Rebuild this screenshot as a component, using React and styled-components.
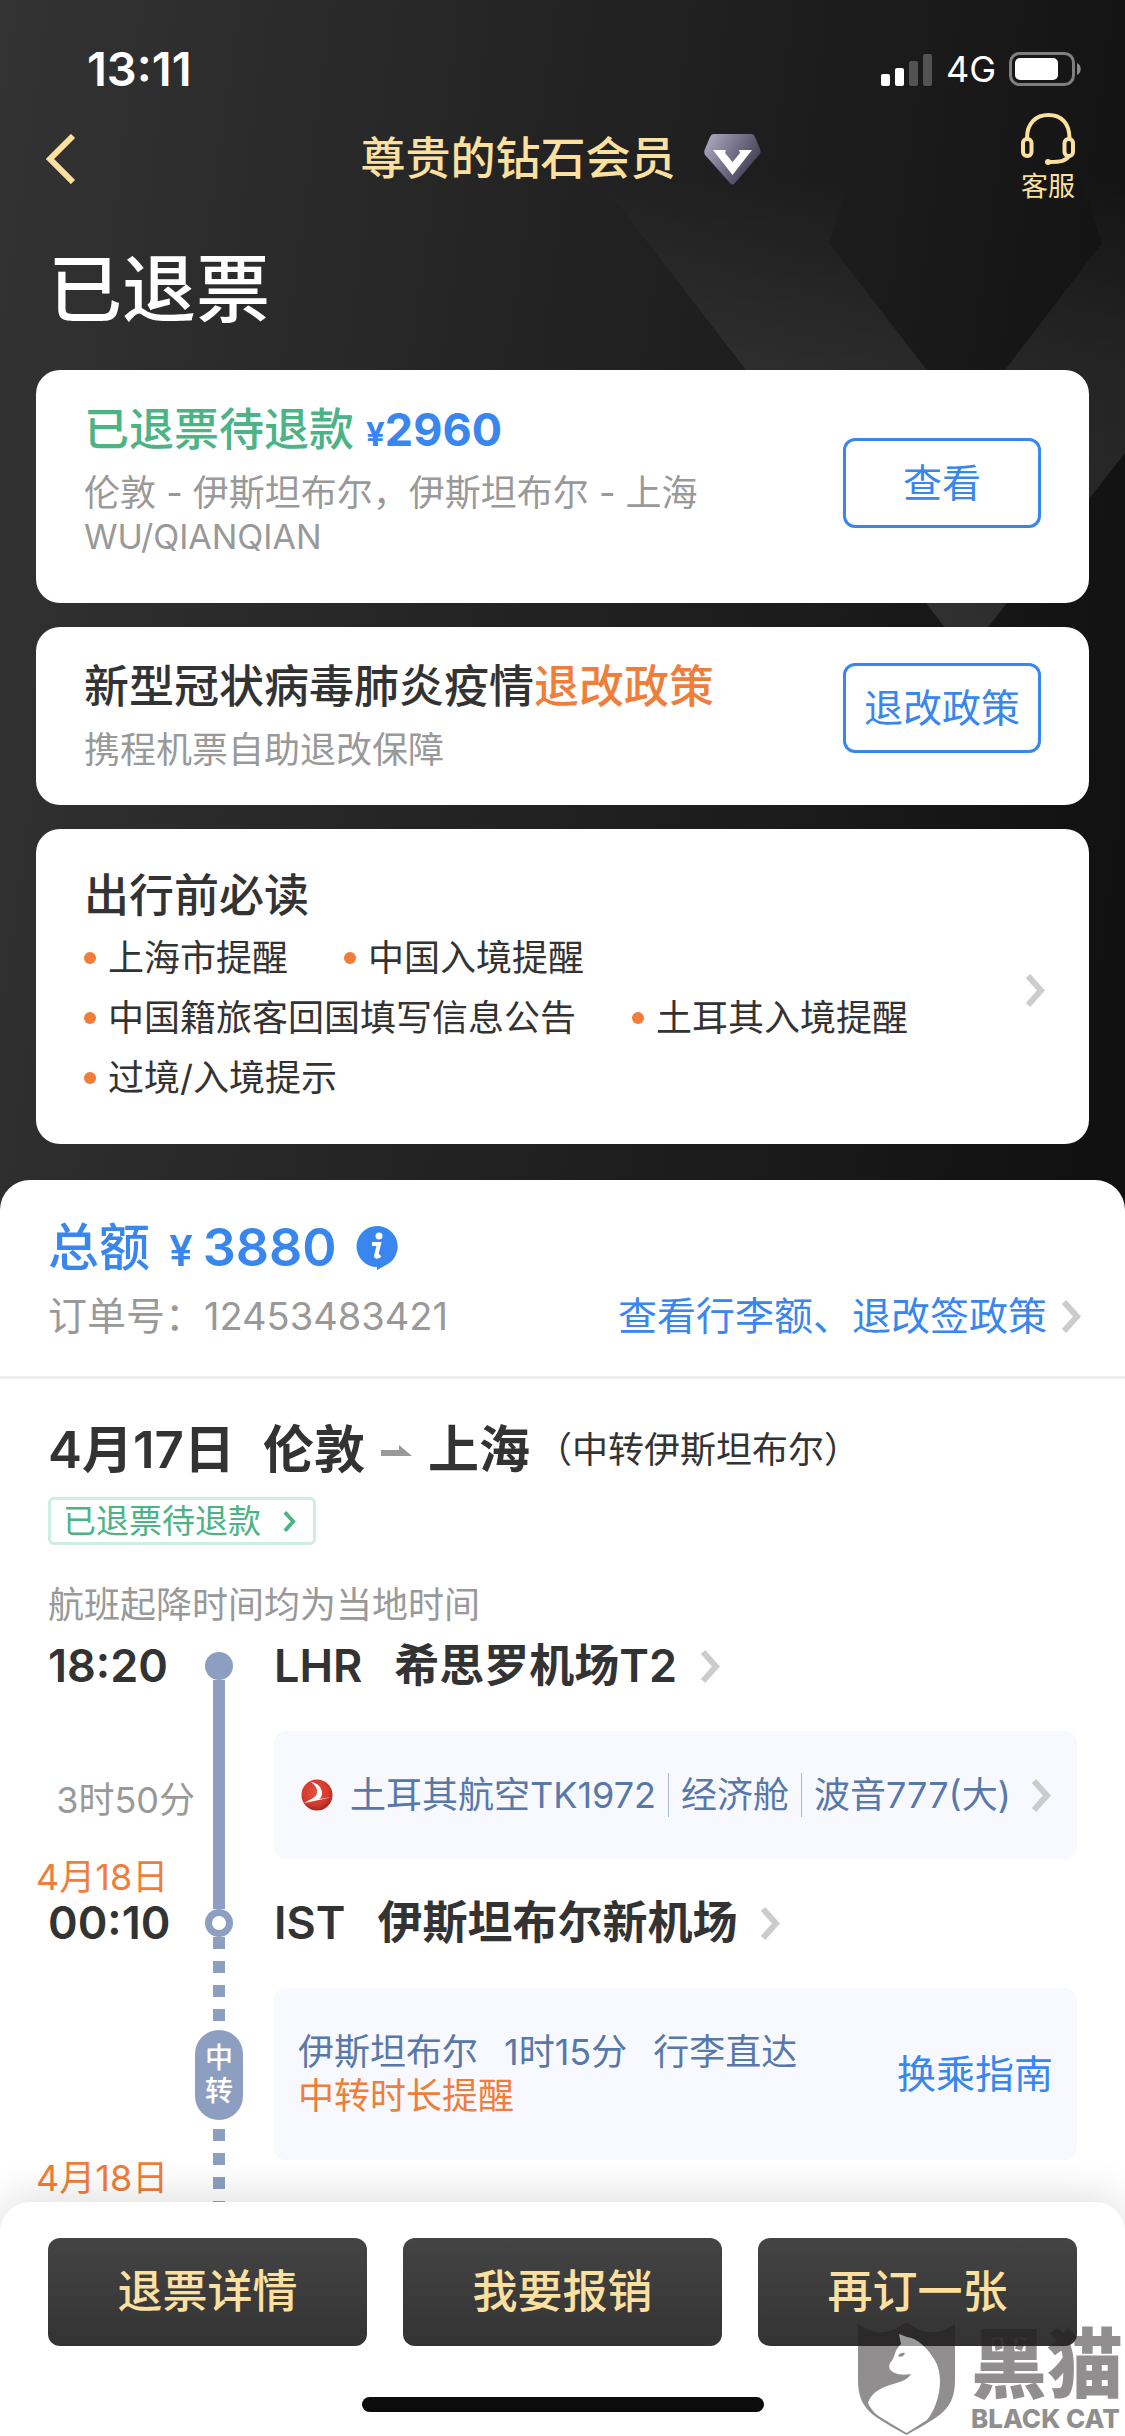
import React from "react";
import styled, { createGlobalStyle } from "styled-components";

const GlobalStyle = createGlobalStyle`
  * {
    box-sizing: border-box;
  }

  body {
    margin: 0;
    background: #fff;
    color: #333;
    font-family: Inter, "Noto Sans CJK SC", sans-serif;
    font-size: 36px;
    line-height: 44px;
  }

  h1, h2, p, ul, ol {
    margin: 0;
    padding: 0;
    font-size: inherit;
    font-weight: inherit;
  }

  ul, ol {
    list-style: none;
  }

  a {
    color: inherit;
    text-decoration: none;
  }

  button {
    border: 0;
    padding: 0;
    background: none;
    color: inherit;
    font: inherit;
    cursor: pointer;
  }

  svg {
    display: block;
    flex: none;
  }
`;

const Chevron = ({ size = 33, color = "#ccc", stroke = 6 }) => (
  <svg width={(size * 2) / 3} height={size} viewBox="0 0 22 33" fill="none">
    <path d="M3 2l13 14.5L3 31" stroke={color} strokeWidth={stroke} />
  </svg>
);

const BackIcon = () => (
  <svg width="30" height="50" viewBox="0 0 30 50" fill="none">
    <path d="M27 2L4 25l23 23" stroke="#fce0a0" strokeWidth="6" />
  </svg>
);

const SignalIcon = () => (
  <svg width="52" height="33" viewBox="0 0 52 33" fill="#fff">
    <rect y="21" width="9" height="12" rx="2" />
    <rect x="14" y="15" width="9" height="18" rx="2" />
    <rect x="28" y="8" width="9" height="25" rx="2" opacity="0.25" />
    <rect x="42" y="1" width="9" height="32" rx="2" opacity="0.25" />
  </svg>
);

const BatteryIcon = () => (
  <svg width="74" height="34" viewBox="0 0 74 34">
    <rect x="1.5" y="1.5" width="63" height="31" rx="9" fill="none" stroke="#fff" strokeOpacity="0.45" strokeWidth="3" />
    <rect x="6" y="6" width="43" height="22" rx="5" fill="#fff" />
    <path d="M68 11c5 2 5 10 0 12z" fill="#fff" opacity="0.5" />
  </svg>
);

const DiamondIcon = () => (
  <svg width="57" height="51" viewBox="0 0 57 51">
    <defs>
      <linearGradient id="diamond" x1="0" y1="0.1" x2="0.9" y2="0.6">
        <stop offset="0" stopColor="#aeaac2" />
        <stop offset="1" stopColor="#474258" />
      </linearGradient>
    </defs>
    <path
      d="M10 0h37c2 0 3 1 4 3l5 12c1 2 1 4-1 6L31 49c-2 2-3 2-5 0L1 21c-1-2-1-4 0-6L6 3c1-2 2-3 4-3z"
      fill="url(#diamond)"
    />
    <path d="M9 16h13l-1 3 7.5 9 7.5-9-1-3h13L28.5 41z" fill="#fff" />
  </svg>
);

const HeadsetIcon = () => (
  <svg width="54" height="53" viewBox="0 0 54 53" fill="none" stroke="#fce0a0" strokeWidth="4">
    <path d="M6 25C6 10 15 2 27.5 2S48.5 10 48.5 25" />
    <rect x="2" y="26" width="8.5" height="17" rx="4" />
    <rect x="43.5" y="26" width="8.5" height="17" rx="4" />
    <path d="M48 43c-3 5-8 6-20 6" />
    <circle cx="27" cy="49" r="3" fill="#fce0a0" stroke="none" />
  </svg>
);

const InfoIcon = () => (
  <svg width="42" height="44" viewBox="0 0 42 44">
    <path d="M21 0a20.5 20.5 0 0 1 9 39l-9 5v-3A20.5 20.5 0 0 1 21 0z" fill="#3886ee" />
    <circle cx="23" cy="10" r="3.5" fill="#fff" />
    <path d="M16 18h7l-3 12c0 1 2 1 4-1" fill="none" stroke="#fff" strokeWidth="4" />
  </svg>
);

const RouteArrow = () => (
  <svg width="31" height="11" viewBox="0 0 31 11">
    <path d="M0 5h18V0l13 11H0z" fill="#999" />
  </svg>
);

const AirlineLogo = () => (
  <svg width="32" height="32" viewBox="0 0 32 32">
    <defs>
      <radialGradient id="airline" cx="0.45" cy="0.4" r="0.6">
        <stop offset="0" stopColor="#e5503f" />
        <stop offset="0.7" stopColor="#d6392c" />
        <stop offset="1" stopColor="#a52820" />
      </radialGradient>
    </defs>
    <circle cx="16" cy="16" r="15.5" fill="url(#airline)" />
    <path d="M10 3c7 1 11 6 11 11 0 3-1 5-3 6l13-2c-9 2-17 4-28 6 6-4 12-5 13-10 1-4-2-8-6-11z" fill="#fff" />
  </svg>
);

const BackdropV = styled.svg`
  position: absolute;
  top: 0;
  right: 0;
`;

const Page = styled.div`
  display: flex;
  flex-direction: column;
  height: 100vh;
  overflow: hidden;
  background: #fff;
`;

const Scroller = styled.main`
  flex: 1;
  min-height: 0;
  overflow-y: auto;
  scrollbar-width: none;
`;

const Hero = styled.header`
  position: relative;
  padding: 45px 36px 72px;
  background: linear-gradient(98deg, #333 0%, #242424 42%, #1a1a1a 72%, #111 96%);
`;

const HeroContent = styled.div`
  position: relative;
`;

const StatusBar = styled.div`
  display: flex;
  align-items: center;
  justify-content: space-between;
  height: 48px;
  padding: 0 6px 0 51px;
  color: #fff;
`;

const Clock = styled.span`
  font-size: 47px;
  font-weight: 600;
`;

const StatusIcons = styled.div`
  display: flex;
  align-items: center;
  gap: 13px;
`;

const NavBar = styled.nav`
  display: grid;
  grid-template-columns: 1fr auto 1fr;
  align-items: center;
  height: 100px;
  margin: 16px 14px 30px 10px;
  color: #fce0a0;
`;

const MemberTitle = styled.div`
  display: flex;
  align-items: center;
  gap: 28px;
  font-size: 45px;
  font-weight: 500;
`;

const Support = styled.button`
  justify-self: end;
  display: flex;
  flex-direction: column;
  align-items: center;
  gap: 3px;
  font-size: 27px;
  line-height: 36px;
`;

const Back = styled.button`
  justify-self: start;
`;

const PageTitle = styled.h1`
  margin: 0 0 31px 12px;
  color: #fff;
  font-size: 74px;
  font-weight: 500;
  line-height: 100px;
`;

const Cards = styled.div`
  display: flex;
  flex-direction: column;
  gap: 24px;
`;

const Card = styled.section`
  display: flex;
  align-items: ${(p) => p.$align || "center"};
  justify-content: space-between;
  padding: ${(p) => p.$padding};
  border-radius: 24px;
  background: #fff;
`;

const CardTitle = styled.h2`
  color: ${(p) => p.$color || "#333"};
  font-size: 45px;
  font-weight: 500;
  line-height: 48px;
`;

const Amount = styled.span`
  margin-left: 12px;
  color: #3886ee;
  font-weight: 700;

  small {
    font-size: 33px;
    line-height: 1;
  }
`;

const Accent = styled.span`
  color: #f07d3a;
`;

const CardNote = styled.div`
  margin-top: 17px;
  color: #999;
`;

const Passenger = styled.p`
  font-size: 34px;
`;

const OutlineButton = styled.button`
  flex: none;
  width: 198px;
  height: 90px;
  border: 3px solid #3886ee;
  border-radius: 12px;
  color: #3886ee;
  font-size: 39px;
`;

const Notices = styled.ul`
  display: flex;
  flex-wrap: wrap;
  column-gap: 56px;
  margin-top: 8px;
`;

const Notice = styled.li`
  display: flex;
  align-items: center;
  gap: 12px;
  line-height: 60px;

  &::before {
    content: "";
    width: 12px;
    height: 12px;
    border-radius: 50%;
    background: #f07d3a;
  }
`;

const Sheet = styled.section`
  position: relative;
  margin-top: -36px;
  border-radius: 30px 30px 0 0;
  background: #fff;
`;

const Summary = styled.div`
  padding: 36px 42px 36px 48px;
  border-bottom: 3px solid #eee;
`;

const Total = styled.h2`
  display: flex;
  align-items: center;
  gap: 19px;
  margin-bottom: 12px;
  color: #3886ee;
  font-size: 51px;
  font-weight: 500;
  line-height: 64px;
`;

const TotalAmount = styled.span`
  display: flex;
  align-items: baseline;
  gap: 10px;
  font-size: 52px;
  font-weight: 600;

  small {
    font-size: 42px;
    line-height: 1;
  }
`;

const OrderRow = styled.div`
  display: flex;
  align-items: center;
  justify-content: space-between;
  color: #999;
  font-size: 39px;
  line-height: 48px;
`;

const OrderNumber = styled.span`
  font-size: 38px;
`;

const PolicyLink = styled.a`
  display: flex;
  align-items: center;
  gap: 14px;
  color: #3886ee;
`;

const Trip = styled.div`
  padding: 39px 48px 0 36px;
`;

const TripHead = styled.div`
  padding-left: 12px;
`;

const Route = styled.h2`
  display: flex;
  align-items: center;
  font-size: 51px;
  font-weight: 600;
  line-height: 64px;

  time {
    margin-right: 28px;
  }

  svg {
    margin: 0 16px;
  }

  small {
    margin-left: 6px;
    font-size: 36px;
    font-weight: 400;
  }
`;

const RefundTag = styled.a`
  display: flex;
  align-items: center;
  gap: 22px;
  width: fit-content;
  height: 48px;
  margin-top: 15px;
  padding: 0 16px 0 12px;
  border: 3px solid #cdeee1;
  border-radius: 6px;
  color: #4bb384;
  font-size: 33px;
`;

const LocalTimeNote = styled.p`
  margin-top: 38px;
  margin-bottom: 11px;
  color: #999;
`;

const Leg = styled.li`
  display: grid;
  grid-template-columns: 159px 48px 1fr;
`;

const Times = styled.div`
  display: flex;
  flex-direction: column;
  padding-bottom: ${(p) => p.$tail || 0}px;
`;

const StopTime = styled.time`
  padding-left: 12px;
  font-size: 45px;
  font-weight: 600;
  line-height: 56px;
`;

const Duration = styled.span`
  margin-top: 84px;
  color: #999;
  text-align: right;
`;

const NextDay = styled.span`
  margin-top: auto;
  color: #f07d3a;
  line-height: 36px;
`;

const Axis = styled.div`
  display: flex;
  flex-direction: column;
  align-items: center;
  padding-top: ${(p) => (p.$start ? 14 : 0)}px;
`;

const Dot = styled.i`
  flex: none;
  width: 28px;
  height: 28px;
  border: ${(p) => (p.$open ? 7 : 14)}px solid #8d9fc1;
  border-radius: 50%;
`;

const Line = styled.i`
  flex: ${(p) => (p.$height ? "none" : 1)};
  width: 12px;
  height: ${(p) => (p.$height ? `${p.$height}px` : "auto")};
  background: ${(p) =>
    p.$dashed
      ? "repeating-linear-gradient(#8d9fc1 0 12px, transparent 12px 24px)"
      : "#8d9fc1"};
`;

const TransferPill = styled.span`
  width: 48px;
  margin-bottom: 9px;
  padding: 12px 10px;
  border-radius: 24px;
  background: #8d9fc1;
  color: #fff;
  font-size: 28px;
  font-weight: 500;
  line-height: 33px;
`;

const Details = styled.div`
  padding: 0 0 ${(p) => 36 + (p.$tail || 0)}px 31px;
`;

const Airport = styled.a`
  display: flex;
  align-items: center;
  gap: 23px;
  margin-bottom: 37px;
  font-size: 45px;
  font-weight: 600;
  line-height: 56px;

  span {
    margin-left: 9px;
  }
`;

const Panel = styled.div`
  display: flex;
  align-items: center;
  justify-content: space-between;
  padding: 42px 24px;
  border-radius: 12px;
  background: #f7f9fe;
  color: #5878aa;
`;

const FlightInfo = styled.div`
  display: flex;
  align-items: center;

  svg {
    margin: 0 5px 0 3px;
  }
`;

const FlightPart = styled.span`
  padding: 0 12px;
  white-space: nowrap;

  & + & {
    border-left: 1px solid #a9bad6;
  }
`;

const TransferInfo = styled.p`
  display: flex;
  gap: 26px;
`;

const GuideLink = styled.a`
  color: #3886ee;
  font-size: 39px;
`;

const BottomBar = styled.footer`
  position: relative;
  margin-top: -30px;
  padding: 36px 48px 24px;
  border-radius: 30px 30px 0 0;
  background: #fff;
  box-shadow: 0 -6px 42px rgba(0, 0, 0, 0.13);
`;

const Actions = styled.div`
  display: grid;
  grid-template-columns: repeat(3, 1fr);
  gap: 36px;
`;

const ActionButton = styled.button`
  height: 108px;
  border-radius: 12px;
  background: linear-gradient(#444, #333);
  color: #fce0a0;
  font-size: 45px;
  font-weight: 500;
`;

const HomeIndicator = styled.div`
  width: 402px;
  height: 15px;
  margin: 51px auto 0;
  border-radius: 8px;
  background: #0c0c0c;
`;

/* Stamp laid over the lower right corner of the bar */
const Stamp = styled.div`
  position: absolute;
  right: 2px;
  bottom: 0;
  display: flex;
  align-items: flex-end;
  gap: 16px;
  color: #231f20;
  opacity: 0.5;
  pointer-events: none;
`;

const StampText = styled.div`
  display: flex;
  flex-direction: column;

  strong {
    font-size: 76px;
    font-weight: 900;
    line-height: 76px;
  }

  span {
    font-size: 26px;
    font-weight: 800;
    line-height: 34px;
  }
`;

const notices = [
  "上海市提醒",
  "中国入境提醒",
  "中国籍旅客回国填写信息公告",
  "土耳其入境提醒",
  "过境/入境提示",
];

const actions = ["退票详情", "我要报销", "再订一张"];

const App = () => {
  return (
    <Page>
      <GlobalStyle />
      <Scroller>
        <Hero>
          <BackdropV width="520" height="660" viewBox="605 0 520 660">
            <defs>
              <linearGradient id="fade" x1="0" y1="0" x2="0" y2="1">
                <stop offset="0.27" stopColor="#fff" stopOpacity="0" />
                <stop offset="0.55" stopColor="#fff" stopOpacity="0.07" />
                <stop offset="1" stopColor="#fff" stopOpacity="0.11" />
              </linearGradient>
            </defs>
            <path
              d="M455 0H1477L1125 453 966 655 605 187zM890 60L829 243 966 421 1102 243 1041 60z"
              fill="url(#fade)"
              fillRule="evenodd"
            />
          </BackdropV>
          <HeroContent>
            <StatusBar>
              <Clock>13:11</Clock>
              <StatusIcons>
                <SignalIcon />
                4G
                <BatteryIcon />
              </StatusIcons>
            </StatusBar>
            <NavBar>
              <Back aria-label="返回">
                <BackIcon />
              </Back>
              <MemberTitle>
                尊贵的钻石会员
                <DiamondIcon />
              </MemberTitle>
              <Support>
                <HeadsetIcon />
                客服
              </Support>
            </NavBar>
            <PageTitle>已退票</PageTitle>
            <Cards>
              <Card $padding="36px 48px 44px">
                <div>
                  <CardTitle $color="#4bb384">
                    已退票待退款
                    <Amount>
                      <small>¥</small>2960
                    </Amount>
                  </CardTitle>
                  <CardNote>
                    <p>伦敦 - 伊斯坦布尔，伊斯坦布尔 - 上海</p>
                    <Passenger>WU/QIANQIAN</Passenger>
                  </CardNote>
                </div>
                <OutlineButton>查看</OutlineButton>
              </Card>
              <Card $padding="36px 48px 33px" $align="flex-start">
                <div>
                  <CardTitle>
                    新型冠状病毒肺炎疫情<Accent>退改政策</Accent>
                  </CardTitle>
                  <CardNote>携程机票自助退改保障</CardNote>
                </div>
                <OutlineButton>退改政策</OutlineButton>
              </Card>
              <Card $padding="43px 42px 36px 48px">
                <div>
                  <CardTitle>出行前必读</CardTitle>
                  <Notices>
                    {notices.map((text) => (
                      <Notice key={text}>{text}</Notice>
                    ))}
                  </Notices>
                </div>
                <Chevron />
              </Card>
            </Cards>
          </HeroContent>
        </Hero>

        <Sheet>
          <Summary>
            <Total>
              总额
              <TotalAmount>
                <small>¥</small>3880
              </TotalAmount>
              <InfoIcon />
            </Total>
            <OrderRow>
              <span>
                订单号：<OrderNumber>12453483421</OrderNumber>
              </span>
              <PolicyLink href="#policy">
                查看行李额、退改签政策
                <Chevron />
              </PolicyLink>
            </OrderRow>
          </Summary>

          <Trip>
            <TripHead>
              <Route>
                <time>4月17日</time>
                伦敦
                <RouteArrow />
                上海
                <small>（中转伊斯坦布尔）</small>
              </Route>
              <RefundTag href="#refund">
                已退票待退款
                <Chevron size={21} color="#4bb384" />
              </RefundTag>
              <LocalTimeNote>航班起降时间均为当地时间</LocalTimeNote>
            </TripHead>

            <ol>
              <Leg>
                <Times>
                  <StopTime>18:20</StopTime>
                  <Duration>3时50分</Duration>
                  <NextDay>4月18日</NextDay>
                </Times>
                <Axis $start>
                  <Dot />
                  <Line />
                </Axis>
                <Details>
                  <Airport href="#lhr">
                    LHR
                    <span>希思罗机场T2</span>
                    <Chevron />
                  </Airport>
                  <Panel>
                    <FlightInfo>
                      <AirlineLogo />
                      <FlightPart>土耳其航空TK1972</FlightPart>
                      <FlightPart>经济舱</FlightPart>
                      <FlightPart>波音777(大)</FlightPart>
                    </FlightInfo>
                    <Chevron />
                  </Panel>
                </Details>
              </Leg>
              <Leg>
                <Times $tail={60}>
                  <StopTime>00:10</StopTime>
                  <NextDay>4月18日</NextDay>
                </Times>
                <Axis>
                  <Line $height={14} />
                  <Dot $open />
                  <Line $dashed $height={93} />
                  <TransferPill>中转</TransferPill>
                  <Line $dashed />
                </Axis>
                <Details $tail={60}>
                  <Airport href="#ist">
                    IST
                    <span>伊斯坦布尔新机场</span>
                    <Chevron />
                  </Airport>
                  <Panel>
                    <div>
                      <TransferInfo>
                        <span>伊斯坦布尔</span>
                        <span>1时15分</span>
                        <span>行李直达</span>
                      </TransferInfo>
                      <Accent>中转时长提醒</Accent>
                    </div>
                    <GuideLink href="#guide">换乘指南</GuideLink>
                  </Panel>
                </Details>
              </Leg>
            </ol>
          </Trip>
        </Sheet>
      </Scroller>

      <BottomBar>
        <Actions>
          {actions.map((label) => (
            <ActionButton key={label}>{label}</ActionButton>
          ))}
        </Actions>
        <HomeIndicator />
        <Stamp>
          <svg width="97" height="114" viewBox="0 0 97 114">
            <path
              d="M0 2Q24 20 48.5 0 73 20 97 2V58C97 88 82 94 48.5 113 15 94 0 88 0 58z"
              fill="currentColor"
            />
            <path
              d="M41 12l8 3c10 1 20 11 25 19 6 8 8 16 8 25 0 12-4 28-13 39L48.5 111 22 95C16 91 13 87 10 81c3-10 12-15 22-18 9-3 17-4 21-11-6 1-12 1-16-1-5-2-7-5-5-10 4-4 4-8 6-12 1-3 3-5 5-7z"
              fill="#fff"
            />
            <path d="M40 34c1-3 5-4 7-3-1 3-4 5-7 3z" fill="currentColor" />
          </svg>
          <StampText>
            <strong>黑猫</strong>
            <span>BLACK CAT</span>
          </StampText>
        </Stamp>
      </BottomBar>
    </Page>
  );
};

export default App;
